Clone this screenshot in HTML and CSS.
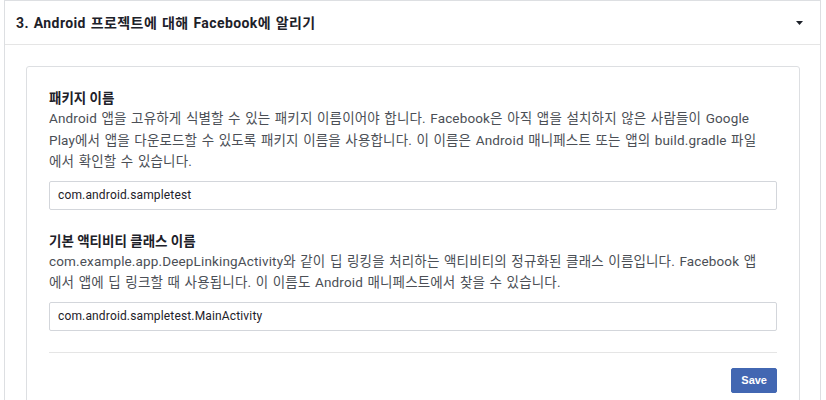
FILE: index.html
```html
<!DOCTYPE html>
<html lang="ko">
<head>
<meta charset="utf-8">
<title>Android 프로젝트</title>
<link rel="stylesheet" href="styles.css">
</head>
<body>
<section class="panel">
  <header class="panel-header">
    <h2 class="panel-title">3. Android 프로젝트에 대해 Facebook에 알리기</h2>
    <svg class="caret" width="7" height="4" viewBox="0 0 7 4" aria-hidden="true"><polygon points="0,0 7,0 3.5,4" fill="#1d2129"/></svg>
  </header>
  <div class="panel-body">
    <div class="card">
      <div class="field">
        <div class="field-label">패키지 이름</div>
        <p class="field-desc">Android 앱을 고유하게 식별할 수 있는 패키지 이름이어야 합니다. Facebook은 아직 앱을 설치하지 않은 사람들이 Google<br>Play에서 앱을 다운로드할 수 있도록 패키지 이름을 사용합니다. 이 이름은 Android 매니페스트 또는 앱의 build.gradle 파일<br>에서 확인할 수 있습니다.</p>
        <input class="field-input" type="text" value="com.android.sampletest">
      </div>
      <div class="field field-second">
        <div class="field-label">기본 액티비티 클래스 이름</div>
        <p class="field-desc">com.example.app.DeepLinkingActivity와 같이 딥 링킹을 처리하는 액티비티의 정규화된 클래스 이름입니다. Facebook 앱<br>에서 앱에 딥 링크할 때 사용됩니다. 이 이름도 Android 매니페스트에서 찾을 수 있습니다.</p>
        <input class="field-input" type="text" value="com.android.sampletest.MainActivity">
      </div>
      <div class="divider"></div>
      <div class="actions">
        <button class="btn-save" type="button">Save</button>
      </div>
    </div>
  </div>
</section>
</body>
</html>
```

FILE: styles.css
```css
html, body {
  margin: 0;
  padding: 0;
  background: #ffffff;
}

body {
  font-family: Roboto, "Noto Sans CJK KR", sans-serif;
  color: #1d2129;
}

.panel {
  margin: 0 5px 0 4px;
  border: 1px solid #dddfe2;
  border-bottom: none;
  background: #ffffff;
}

.panel-header {
  height: 43px;
  border-bottom: 1px solid #e5e5e5;
  display: flex;
  align-items: center;
  justify-content: space-between;
  padding: 0 17px 0 11px;
}

.panel-title {
  margin: 0;
  font-size: 14px;
  font-weight: bold;
  line-height: 20px;
  letter-spacing: 0.4px;
  word-spacing: 1px;
  color: #1d2129;
}

.caret {
  display: block;
  margin-top: 1px;
}

.panel-body {
  padding: 21px 20px 0 21px;
}

.card {
  border: 1px solid #dddfe2;
  border-radius: 3px;
  padding: 21px 22px 22px;
}

.field-label {
  font-size: 13.5px;
  font-weight: bold;
  line-height: 20px;
  color: #1d2129;
}

.field-desc {
  margin: 0;
  font-size: 13.5px;
  line-height: 21.5px;
  letter-spacing: 0.15px;
  word-spacing: 1px;
  white-space: nowrap;
  color: #4b4f56;
}

.field-input {
  display: block;
  box-sizing: border-box;
  width: 100%;
  height: 29px;
  margin: 8px 0 0;
  padding: 0 8px;
  border: 1px solid #d3d6db;
  border-radius: 2px;
  font-family: Roboto, "Noto Sans CJK KR", sans-serif;
  font-size: 12px;
  letter-spacing: 0.15px;
  color: #1d2129;
  background: #ffffff;
  outline: none;
}

.field-second {
  margin-top: 21px;
}

.divider {
  height: 1px;
  margin-top: 21px;
  background: #e5e5e5;
}

.actions {
  display: flex;
  justify-content: flex-end;
  margin-top: 15.5px;
}

.btn-save {
  box-sizing: border-box;
  height: 25px;
  padding: 0 9px;
  border: 1px solid #4267b2;
  border-radius: 2px;
  background: #4267b2;
  color: #ffffff;
  font-family: "Liberation Sans", Arial, sans-serif;
  font-size: 11px;
  font-weight: bold;
  line-height: 23px;
}
```
